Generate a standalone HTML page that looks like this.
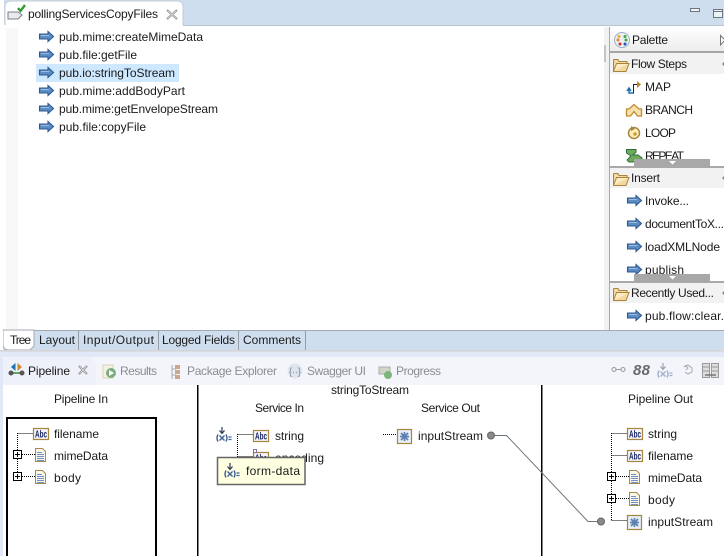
<!DOCTYPE html>
<html><head><meta charset="utf-8">
<style>
html,body{margin:0;padding:0;background:#fff;width:724px;height:556px;overflow:hidden}
svg{display:block}
text{font-family:"Liberation Sans",sans-serif;font-size:12px;fill:#1a1a1a}
.g{fill:#8a8d90}
</style></head><body>
<svg width="724" height="556" viewBox="0 0 724 556" xmlns="http://www.w3.org/2000/svg">
<defs>
<linearGradient id="pal" x1="0" y1="0" x2="0" y2="1"><stop offset="0" stop-color="#fff"/><stop offset="1" stop-color="#ececec"/></linearGradient>
<g id="arrow"><path d="M0.5 3H9V0.5L14.500 5.500L9 10.500V8H0.5Z" fill="#5b8cc4" stroke="#2c5a92" stroke-width="1.100"/><path d="M2 4.500H10" stroke="#9dbde0"/></g>
<g id="abc"><rect x="0.5" y="0.5" width="15" height="11" fill="#f4f6fb" stroke="#a5863c" stroke-width="1.200"/><text x="2" y="9.500" style="font-size:10px;font-weight:bold;fill:#14205f" textLength="12" lengthAdjust="spacingAndGlyphs">Abc</text></g>
<g id="doc"><path d="M0.5 0.5H7.500L10.500 3.500V13.500H0.5Z" fill="#faf7ea" stroke="#a58a4c"/><path d="M2 4.500H7M2 6.500H9M2 8.500H9M2 10.500H9M2 12.500H9" stroke="#6f92c6"/></g>
<g id="obj"><rect x="0.5" y="0.5" width="14" height="14" fill="#e6eef6" stroke="#a5863c" stroke-width="1.200"/><path d="M4 4L11 11M11 4L4 11M7.500 3V12M3 7.500H12" stroke="#5f7fae" stroke-width="1.700"/></g>
<g id="plus"><rect x="0.5" y="0.5" width="8" height="8" fill="#fff" stroke="#000"/><path d="M2 4.500H7M4.500 2V7" stroke="#000"/></g>
<g id="xeq"><path d="M7 0V5.500M4.500 3.500L7 6.500L9.500 3.500" stroke="#2b3a58" fill="none" stroke-width="1.200"/><path d="M3 7.500Q1 11 3 14.500M11 7.500Q13 11 11 14.500M4.500 8.500L9.500 13.500M9.500 8.500L4.500 13.500" stroke="#3f5f95" fill="none" stroke-width="1.400"/><path d="M13.500 10H16.500M13.500 12.500H16.500" stroke="#3f5f95" stroke-width="1.200"/></g>
<g id="folder"><path d="M0.5 3V14.500H13L16 6.500H14V4.500H6L5 2.500H1Z" fill="#f3d9a0" stroke="#a8843e"/><path d="M0.5 14.500L3.500 6.500H16" fill="#fbeac4" stroke="#a8843e"/></g>
</defs>

<!-- top bar -->
<rect x="0" y="0" width="724" height="26" fill="#cfdeee"/>
<rect x="0" y="0" width="4" height="26" fill="#fff"/>
<path d="M5 26V7Q5 1 11 1H177Q183 1 183 7V26Z" fill="#fff" stroke="#c6ccd6"/>
<rect x="0" y="25" width="724" height="306" fill="#fff"/>
<rect x="183" y="25" width="541" height="1" fill="#b9c4d0"/>
<path d="M8 12H18L22 15L18 19H8Z" fill="#e8eaee" stroke="#78808a"/>
<path d="M18 8L20.500 11L25 5" stroke="#2f9e2f" stroke-width="2.400" fill="none"/>
<text x="28" y="18" textLength="130">pollingServicesCopyFiles</text>
<path d="M167 10L177 19M177 10L167 19" stroke="#888" stroke-width="2"/>
<path d="M167.500 10.500L176.500 18.500M176.500 10.500L167.500 18.500" stroke="#eee" stroke-width="0.700"/>
<rect x="690.500" y="8.500" width="9" height="3" fill="#eef3f8" stroke="#6d7680"/>
<rect x="713.500" y="9.500" width="9" height="8" fill="#eef3f8" stroke="#6d7680"/><path d="M713 11.500H723" stroke="#6d7680"/>

<!-- editor -->
<rect x="6" y="28" width="12" height="302" fill="#f8f8f8"/>
<rect x="36" y="64" width="143" height="18" fill="#cde8ff"/>
<use href="#arrow" x="39" y="31"/><text x="59" y="41" textLength="144">pub.mime:createMimeData</text>
<use href="#arrow" x="39" y="49"/><text x="59" y="59" textLength="78">pub.file:getFile</text>
<use href="#arrow" x="39" y="67"/><text x="59" y="77" textLength="116">pub.io:stringToStream</text>
<use href="#arrow" x="39" y="85"/><text x="59" y="95" textLength="126">pub.mime:addBodyPart</text>
<use href="#arrow" x="39" y="103"/><text x="59" y="113" textLength="159">pub.mime:getEnvelopeStream</text>
<use href="#arrow" x="39" y="121"/><text x="59" y="131" textLength="87">pub.file:copyFile</text>

<!-- palette -->
<rect x="604" y="27" width="5" height="303" fill="#f1f1f1"/>
<rect x="604" y="45" width="2" height="17" fill="#c4c4c4"/>
<rect x="609" y="27" width="1" height="303" fill="#a9a9a9"/>
<rect x="610" y="27" width="114" height="24" fill="url(#pal)"/>
<rect x="610" y="51" width="114" height="2" fill="#a5a5a5"/>
<circle cx="622" cy="40" r="7.500" fill="#eaf0f6" stroke="#9eb0c4"/>
<circle cx="619" cy="36.500" r="1.500" fill="#e8b020"/><circle cx="625" cy="36.500" r="1.500" fill="#3ca83c"/><circle cx="618" cy="40" r="1.500" fill="#f08020"/><circle cx="626" cy="40" r="1.500" fill="#3ca83c"/><circle cx="620" cy="44" r="1.500" fill="#d03030"/><circle cx="625" cy="44" r="1.500" fill="#2050c0"/>
<text x="632" y="44" textLength="36">Palette</text>
<path d="M720.500 35.500L725 40L720.500 45Z" fill="#fff" stroke="#777"/>
<!-- flow steps -->
<rect x="610" y="53" width="114" height="21" fill="#f2f2f2"/>
<use href="#folder" x="613" y="57"/>
<text x="631" y="68" textLength="56">Flow Steps</text>
<path d="M722 64L724 62V66Z" fill="#888"/>
<path d="M634 93H629V89M627 91L629 88L631 91" fill="none" stroke="#1f6fb4" stroke-width="1.500"/>
<path d="M633.500 93V84.500H637" fill="none" stroke="#222"/><path d="M637 81L641 84.500L637 88Z" fill="#b9812a"/>
<text x="645" y="91" textLength="26">MAP</text>
<path d="M626.500 116V109H629L634 104.500L639 109H641.500V116H637.500L634 111.500L630.500 116Z" fill="#f7e2ae" stroke="#c08a2c" stroke-width="1.300"/>
<text x="645" y="114" textLength="48">BRANCH</text>
<circle cx="634" cy="133" r="5.500" fill="#fbeeb8" stroke="#a8843e" stroke-width="1.500"/><path d="M631 126L635 129L631 131Z" fill="#a8843e"/><circle cx="635" cy="134" r="1.700" fill="#c99a34"/>
<text x="645" y="137" textLength="31">LOOP</text>
<path d="M626.500 149.500H636V152L633 155H638L642 158V162H629L627 160L631 156L626.500 153Z" fill="#6dab5c" stroke="#2f6e3a"/>
<text x="645" y="160" textLength="39">REPEAT</text>
<rect x="634" y="159" width="76" height="7" fill="#a8a8a8"/>
<path d="M669 161H676L672.500 164.500Z" fill="#fff"/>
<rect x="610" y="166" width="114" height="2" fill="#a9a9a9"/>
<!-- insert -->
<rect x="610" y="168" width="114" height="20" fill="#f2f2f2"/>
<use href="#folder" x="613" y="171"/>
<text x="631" y="182" textLength="29">Insert</text>
<path d="M722 178L724 176V180Z" fill="#888"/>
<use href="#arrow" x="627" y="195"/><text x="645" y="205" textLength="44">Invoke...</text>
<use href="#arrow" x="627" y="218"/><text x="645" y="228" textLength="79">documentToX...</text>
<use href="#arrow" x="627" y="241"/><text x="645" y="251" textLength="75">loadXMLNode</text>
<use href="#arrow" x="627" y="264"/><text x="645" y="274" textLength="39">publish</text>
<rect x="634" y="274" width="76" height="7" fill="#a8a8a8"/>
<path d="M669 276H676L672.500 279.500Z" fill="#fff"/>
<rect x="610" y="281" width="114" height="2" fill="#a9a9a9"/>
<!-- recent -->
<rect x="610" y="283" width="114" height="20" fill="#f2f2f2"/>
<use href="#folder" x="613" y="286"/>
<text x="631" y="297" textLength="83">Recently Used...</text>
<path d="M722 293L724 291V295Z" fill="#888"/>
<use href="#arrow" x="627" y="310"/><text x="645" y="320" textLength="79">pub.flow:clear.</text>

<!-- editor bottom tabs -->
<rect x="0" y="330" width="724" height="20" fill="#cfdeee"/>
<rect x="3" y="330" width="721" height="1" fill="#a3a9b0"/>
<path d="M3 330V344Q3 350 9 350H30L34 346V330Z" fill="#fff" stroke="#a3a9b0"/>
<rect x="0" y="330" width="3" height="20" fill="#fff"/>
<path d="M78.500 331V350M158.500 331V350M238.500 331V350M305.500 331V350" stroke="#969ca4"/>
<text x="10" y="344" textLength="21">Tree</text>
<text x="39" y="344" textLength="36">Layout</text>
<text x="83" y="344" textLength="71">Input/Output</text>
<text x="162" y="344" textLength="73">Logged Fields</text>
<text x="243" y="344" textLength="58">Comments</text>

<!-- bottom view -->
<rect x="0" y="350" width="724" height="7" fill="#e1e8f7"/>
<rect x="0" y="350" width="724" height="1" fill="#d2d5dc"/>
<rect x="0" y="351" width="724" height="1" fill="#dcdcdc"/>
<rect x="0" y="357" width="724" height="28" fill="#f3f5fb"/>
<path d="M3 385V363Q3 357 9 357H86Q92 357 96 364V385Z" fill="#eef1f9"/>
<rect x="0" y="357" width="3" height="199" fill="#e1e8f7"/>
<rect x="3" y="385" width="721" height="171" fill="#fff"/>
<path d="M11 373H22" stroke="#2f8a3c" stroke-width="1.500"/><circle cx="11" cy="373" r="2.500" fill="#555"/><circle cx="22" cy="373" r="2.500" fill="#555"/>
<path d="M11 367L15.500 363V371Z" fill="#1f6fb4"/><path d="M22 367L17.500 363V371Z" fill="#c98a2a"/>
<text x="28" y="375" textLength="42">Pipeline</text>
<path d="M79 366L87 374M87 366L79 374" stroke="#888" stroke-width="2"/><path d="M79.500 366.500L86.500 373.500M86.500 366.500L79.500 373.500" stroke="#eee" stroke-width="0.700"/>
<rect x="103" y="365" width="10" height="13" fill="#f4f2e4" stroke="#d8d2ac"/><circle cx="111" cy="373" r="5" fill="#7dab80"/><path d="M109 370L114 373L109 376Z" fill="#fff"/>
<text class="g" x="120" y="375" textLength="37">Results</text>
<path d="M172 365V379M172 369H176M172 375H176" stroke="#aaa" fill="none"/><rect x="175" y="365" width="5" height="4" fill="#c8a890"/><rect x="175" y="370" width="5" height="4" fill="#c8a890"/><rect x="175" y="375" width="5" height="4" fill="#c8a890"/>
<text class="g" x="187" y="375" textLength="90">Package Explorer</text>
<circle cx="295" cy="371" r="7.500" fill="#dfe5f0"/><text class="g" x="289" y="375" style="font-size:10px" textLength="12">{··}</text>
<text class="g" x="307" y="375" textLength="59">Swagger UI</text>
<rect x="379" y="367" width="11" height="7" fill="#cfd8c8" stroke="#a8b0a8"/><circle cx="388" cy="375" r="4" fill="#7cb67c"/>
<text class="g" x="396" y="375" textLength="45">Progress</text>
<circle cx="614" cy="369.500" r="2" fill="none" stroke="#999"/><circle cx="623" cy="369.500" r="2" fill="none" stroke="#999"/><path d="M616 369.500H621" stroke="#999"/>
<text x="633" y="375" style="font-size:15px;font-style:italic;font-weight:bold;fill:#6a6a6a" textLength="17">88</text>
<use href="#xeq" x="656" y="363" opacity="0.450"/>
<path d="M684 367L688 365L692 368V372L688 374L685 372" fill="none" stroke="#aaa"/><path d="M685 365L688 368L686 370" fill="none" stroke="#aaa"/>
<rect x="702.500" y="363.500" width="7" height="14" fill="#ddd" stroke="#999"/><rect x="711.500" y="363.500" width="7" height="14" fill="#ddd" stroke="#999"/><path d="M703 367H709M703 371H709M712 367H718M712 371H718" stroke="#999"/><path d="M705 375H716" stroke="#777" stroke-width="1.500"/>

<!-- pipeline panes -->
<rect x="197" y="385" width="1.500" height="171" fill="#000"/>
<rect x="541" y="385" width="1.500" height="171" fill="#000"/>
<rect x="7" y="418" width="149" height="140" fill="#fff" stroke="#000" stroke-width="2"/>
<text x="54" y="403" textLength="54">Pipeline In</text>
<text x="331" y="394" textLength="78">stringToStream</text>
<text x="255" y="412" textLength="49">Service In</text>
<text x="421" y="412" textLength="59">Service Out</text>
<text x="628" y="403" textLength="65">Pipeline Out</text>

<g fill="none" stroke="#000" stroke-dasharray="1 1">
<path d="M17.500 433.500H33M17.500 433V473M22 454.500H35M22 476.500H35"/>
<path d="M237.500 434.500H253M237.500 434V458M237.500 456.500H253"/>
<path d="M383 434.500H397"/>
<path d="M611.500 433.500H627M611.500 455.500H627M611.500 433V521M616 476.500H629M616 498.500H629M611.500 520.500H627"/>
</g>

<!-- pipeline in -->
<use href="#abc" x="33" y="428"/><text x="54" y="438" textLength="45">filename</text>
<use href="#plus" x="13" y="450"/><use href="#doc" x="35" y="448"/><text x="54" y="460" textLength="54">mimeData</text>
<use href="#plus" x="13" y="472"/><use href="#doc" x="35" y="470"/><text x="54" y="482" textLength="27">body</text>

<!-- service in -->
<use href="#xeq" x="215" y="427"/>
<use href="#abc" x="253" y="430"/><text x="275" y="440" textLength="29">string</text>
<use href="#abc" x="253" y="452"/><rect x="253.500" y="449.500" width="3" height="3" fill="#fff" stroke="#8a70a8"/>
<text x="275" y="462" textLength="49">encoding</text>

<!-- tooltip -->
<rect x="217.500" y="457.500" width="87.500" height="27" fill="#ffffe1" stroke="#666" stroke-width="1.500"/>
<use href="#xeq" x="223" y="463"/>
<text x="246" y="475" textLength="54">form-data</text>

<!-- service out -->
<use href="#obj" x="397" y="429"/><text x="418" y="440" textLength="65">inputStream</text>
<path d="M491 435.500H506.500L588 521.500H601" fill="none" stroke="#6d7580"/>
<circle cx="491" cy="435.500" r="3.500" fill="#8a8a8a" stroke="#666"/>
<circle cx="601" cy="521.500" r="3.500" fill="#8a8a8a" stroke="#666"/>

<!-- pipeline out -->
<use href="#abc" x="627" y="428"/><text x="648" y="438" textLength="29">string</text>
<use href="#abc" x="627" y="450"/><text x="648" y="460" textLength="45">filename</text>
<use href="#plus" x="607" y="472"/><use href="#doc" x="629" y="470"/><text x="648" y="482" textLength="54">mimeData</text>
<use href="#plus" x="607" y="494"/><use href="#doc" x="629" y="492"/><text x="648" y="504" textLength="27">body</text>
<use href="#obj" x="627" y="515"/><text x="648" y="526" textLength="65">inputStream</text>
</svg>
</body></html>
